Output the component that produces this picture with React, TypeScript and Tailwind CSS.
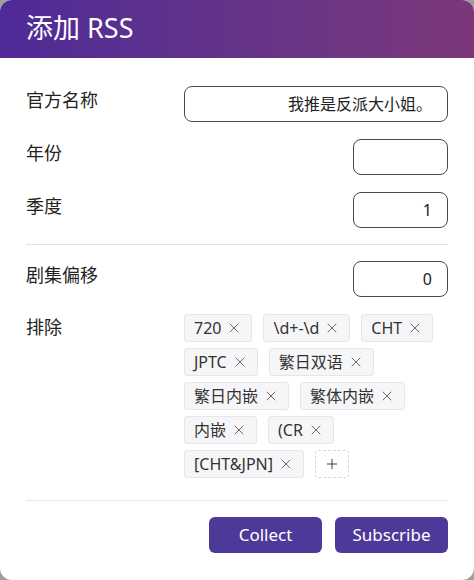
import { X, Plus } from 'lucide-react';

const TAGS = ['720', '\\d+-\\d', 'CHT', 'JPTC', '繁日双语', '繁日内嵌', '繁体内嵌', '内嵌', '(CR', '[CHT&JPN]'];

const FONT = { fontFamily: '"Noto Sans", "Noto Sans CJK SC", sans-serif' };

function Field({ value, wide }: { value: string; wide?: boolean }) {
  return (
    <div
      className={`${wide ? 'w-[264px]' : 'w-[95px]'} h-[36px] rounded-[8px] border border-[#4a4a4a] flex items-center justify-end pr-[15px] text-[16px] text-[#222]`}
    >
      {value}
    </div>
  );
}

export default function App() {
  return (
    <div className="w-[474px] h-[580px] bg-[#9e9e9e]" style={FONT}>
      <div className="h-full bg-white rounded-[12px] overflow-hidden flex flex-col">
        <div className="h-[58px] shrink-0 bg-gradient-to-r from-[#4e2a98] to-[#7c3779] px-[26px] flex items-center">
          <h1 className="text-[27px] text-white leading-none pb-[4px]">添加 RSS</h1>
        </div>

        <div className="px-[26px] pt-[28px]">
          {/* 基本信息 */}
          <div className="flex flex-col gap-[17px]">
            <div className="flex items-start justify-between">
              <span className="text-[18px] leading-[28px] text-[#222]">官方名称</span>
              <Field value="我推是反派大小姐。" wide />
            </div>
            <div className="flex items-start justify-between">
              <span className="text-[18px] leading-[28px] text-[#222]">年份</span>
              <Field value="" />
            </div>
            <div className="flex items-start justify-between">
              <span className="text-[18px] leading-[28px] text-[#222]">季度</span>
              <Field value="1" />
            </div>
          </div>

          <div className="h-px bg-[#e2e2e6] my-[16px]" />

          <div className="flex items-start justify-between">
            <span className="text-[18px] leading-[28px] text-[#222]">剧集偏移</span>
            <Field value="0" />
          </div>

          <div className="flex items-start mt-[17px]">
            <span className="w-[158px] shrink-0 text-[18px] leading-[26px] text-[#222]">排除</span>
            <div className="flex flex-wrap gap-x-[11px] gap-y-[6px] w-[264px]">
              {TAGS.map((t) => (
                <span
                  key={t}
                  className="h-[28px] inline-flex items-center gap-[5px] px-[9px] rounded-[3px] border border-[#e6e6ea] bg-[#f6f6f8] text-[16px] text-[#333]"
                >
                  {t}
                  <X className="w-[16px] h-[16px] text-[#555]" strokeWidth={1.3} />
                </span>
              ))}
              <span className="h-[28px] w-[34px] inline-flex items-center justify-center rounded-[3px] border border-dashed border-[#d8d8dc] text-[#333]">
                <Plus className="w-[16px] h-[16px]" strokeWidth={1.4} />
              </span>
            </div>
          </div>

          <div className="h-px bg-[#e6e6ea] mt-[22px]" />

          <div className="flex justify-end gap-[13px] mt-[16px]">
            <button className="w-[113px] h-[36px] rounded-[6px] bg-[#4d3a98] text-white text-[17px]">Collect</button>
            <button className="w-[113px] h-[36px] rounded-[6px] bg-[#4d3a98] text-white text-[17px]">Subscribe</button>
          </div>
        </div>
      </div>
    </div>
  );
}
